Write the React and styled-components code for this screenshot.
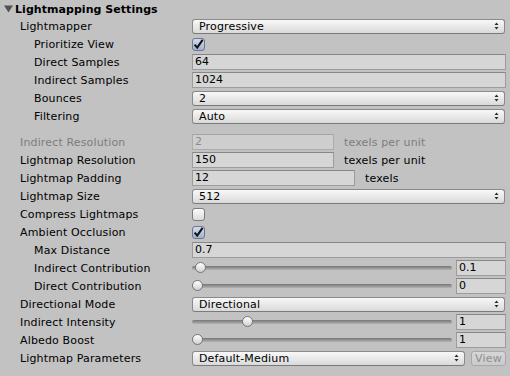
import React from "react";
import styled, { createGlobalStyle } from "styled-components";

const GlobalStyle = createGlobalStyle`
  html, body { margin: 0; padding: 0; background: #c2c2c2; }
  body {
    font-family: "DejaVu Sans", Verdana, sans-serif;
    font-size: 11px;
    color: #000;
  }
`;

const Panel = styled.div`
  width: 510px;
  height: 376px;
  box-sizing: border-box;
  padding-top: 1px;
  background: #c2c2c2;
  overflow: hidden;
`;

const Header = styled.div`
  display: flex;
  align-items: center;
  height: 16px;
  padding-left: 4px;
  gap: 2px;
  font-weight: bold;
  letter-spacing: 0.05px;
`;

const Row = styled.div`
  display: flex;
  align-items: center;
  height: 18px;
`;

const Spacer = styled.div`
  height: 8px;
`;

const Label = styled.div`
  flex: 0 0 192px;
  box-sizing: border-box;
  padding-left: ${(p) => (p.$indent ? 34 : 20)}px;
  color: ${(p) => (p.$disabled ? "#7d7d7d" : "#000")};
  white-space: nowrap;
  letter-spacing: 0.15px;
`;

const Controls = styled.div`
  flex: 1;
  min-width: 0;
  display: flex;
  align-items: center;
  gap: ${(p) => p.$gap || 0}px;
  padding-right: 4px;
`;

const TextField = styled.div`
  box-sizing: border-box;
  height: 16px;
  ${(p) => (p.$width ? `width: ${p.$width}px; flex: 0 0 ${p.$width}px;` : "flex: 1;")}
  border: 1px solid ${(p) => (p.$disabled ? "#acacac" : "#9c9c9c")};
  border-top-color: ${(p) => (p.$disabled ? "#a4a4a4" : "#878787")};
  background: ${(p) => (p.$disabled ? "#cecece" : "#d6d6d6")};
  color: ${(p) => (p.$disabled ? "#8a8a8a" : "#000")};
  padding: 0 2px;
  line-height: 14px;
  white-space: nowrap;
  overflow: hidden;
`;

const Suffix = styled.span`
  color: ${(p) => (p.$disabled ? "#7d7d7d" : "#000")};
  white-space: nowrap;
  letter-spacing: 0.15px;
`;

const PopupBox = styled.div`
  box-sizing: border-box;
  height: 15px;
  ${(p) => (p.$width ? `width: ${p.$width}px; flex: 0 0 ${p.$width}px;` : "flex: 1; margin-right: 1px;")}
  display: flex;
  align-items: center;
  justify-content: space-between;
  padding: 0 5px 0 6px;
  border: 1px solid #8a8a8a;
  border-bottom-color: #7a7a7a;
  border-radius: 3px;
  background: linear-gradient(#f8f8f8, #e6e6e6 60%, #d9d9d9);
  letter-spacing: 0.15px;
  white-space: nowrap;
`;

const Button = styled.div`
  box-sizing: border-box;
  height: 15px;
  flex: 1;
  display: flex;
  align-items: center;
  justify-content: center;
  border: 1px solid #a8a8a8;
  border-radius: 3px;
  background: linear-gradient(#d6d6d6, #cbcbcb);
  color: #8e8e8e;
  letter-spacing: 0.2px;
`;

const CheckBox = styled.div`
  box-sizing: border-box;
  width: 13px;
  height: 13px;
  border: 1px solid ${(p) => (p.$checked ? "#6f7790" : "#7c7c7c")};
  border-radius: 3px;
  background: ${(p) =>
    p.$checked
      ? "linear-gradient(#d3dbee, #a3b0d0)"
      : "linear-gradient(#fbfbfb, #dcdcdc)"};
  display: flex;
  align-items: center;
  justify-content: center;
  overflow: visible;
`;

const SliderArea = styled.div`
  flex: 1;
  position: relative;
  height: 18px;
  display: flex;
  align-items: center;
`;

const Track = styled.div`
  flex: 1;
  height: 4px;
  border-radius: 2px;
  background: linear-gradient(#767676, #9a9a9a 60%, #b4b4b4);
`;

const Thumb = styled.div`
  position: absolute;
  top: 3px;
  width: 11px;
  height: 11px;
  box-sizing: border-box;
  border-radius: 50%;
  border: 1px solid #767676;
  background: linear-gradient(#ffffff, #e4e4e4 60%, #cfcfcf);
`;

const ArrowIcon = () => (
  <svg width="5" height="8" viewBox="0 0 5 8">
    <polygon points="0.5,3 2.5,0.5 4.5,3" fill="#2a2a2a" />
    <polygon points="0.5,5 2.5,7.5 4.5,5" fill="#2a2a2a" />
  </svg>
);

const Popup = ({ value, width }) => (
  <PopupBox $width={width}>
    <span>{value}</span>
    <ArrowIcon />
  </PopupBox>
);

const Check = ({ checked }) => (
  <CheckBox $checked={checked}>
    {checked && (
      <svg width="11" height="11" viewBox="0 0 11 11" style={{ overflow: "visible" }}>
        <path d="M1.6 5.6 L4.2 8.6 L9.6 0.8" fill="none" stroke="#151515" strokeWidth="2.1" />
      </svg>
    )}
  </CheckBox>
);

const Slider = ({ value, min, max, display }) => {
  const frac = (value - min) / (max - min);
  return (
    <Controls $gap={4}>
      <SliderArea>
        <Track />
        <Thumb style={{ left: `${frac * 250}px` }} />
      </SliderArea>
      <TextField $width={50}>{display}</TextField>
    </Controls>
  );
};

export default function App() {
  return (
    <Panel>
      <GlobalStyle />
      <Header>
        <svg width="9" height="8" viewBox="0 0 9 8">
          <polygon points="0,0.5 9,0.5 4.5,7.5" fill="#525252" />
        </svg>
        <span>Lightmapping Settings</span>
      </Header>

      <Row>
        <Label>Lightmapper</Label>
        <Controls><Popup value="Progressive" /></Controls>
      </Row>
      <Row>
        <Label $indent>Prioritize View</Label>
        <Controls><Check checked /></Controls>
      </Row>
      <Row>
        <Label $indent>Direct Samples</Label>
        <Controls><TextField>64</TextField></Controls>
      </Row>
      <Row>
        <Label $indent>Indirect Samples</Label>
        <Controls><TextField>1024</TextField></Controls>
      </Row>
      <Row>
        <Label $indent>Bounces</Label>
        <Controls><Popup value="2" /></Controls>
      </Row>
      <Row>
        <Label $indent>Filtering</Label>
        <Controls><Popup value="Auto" /></Controls>
      </Row>

      <Spacer />

      <Row>
        <Label $disabled>Indirect Resolution</Label>
        <Controls $gap={10}>
          <TextField $width={142} $disabled>2</TextField>
          <Suffix $disabled>texels per unit</Suffix>
        </Controls>
      </Row>
      <Row>
        <Label>Lightmap Resolution</Label>
        <Controls $gap={10}>
          <TextField $width={142}>150</TextField>
          <Suffix>texels per unit</Suffix>
        </Controls>
      </Row>
      <Row>
        <Label>Lightmap Padding</Label>
        <Controls $gap={10}>
          <TextField $width={163}>12</TextField>
          <Suffix>texels</Suffix>
        </Controls>
      </Row>
      <Row>
        <Label>Lightmap Size</Label>
        <Controls><Popup value="512" /></Controls>
      </Row>
      <Row>
        <Label>Compress Lightmaps</Label>
        <Controls><Check /></Controls>
      </Row>
      <Row>
        <Label>Ambient Occlusion</Label>
        <Controls><Check checked /></Controls>
      </Row>
      <Row>
        <Label $indent>Max Distance</Label>
        <Controls><TextField>0.7</TextField></Controls>
      </Row>
      <Row>
        <Label $indent>Indirect Contribution</Label>
        <Slider value={0.1} min={0} max={10} display="0.1" />
      </Row>
      <Row>
        <Label $indent>Direct Contribution</Label>
        <Slider value={0} min={0} max={1} display="0" />
      </Row>
      <Row>
        <Label>Directional Mode</Label>
        <Controls><Popup value="Directional" /></Controls>
      </Row>
      <Row>
        <Label>Indirect Intensity</Label>
        <Slider value={1} min={0} max={5} display="1" />
      </Row>
      <Row>
        <Label>Albedo Boost</Label>
        <Slider value={1} min={1} max={10} display="1" />
      </Row>
      <Row>
        <Label>Lightmap Parameters</Label>
        <Controls $gap={6}>
          <Popup value="Default-Medium" width={273} />
          <Button>View</Button>
        </Controls>
      </Row>
    </Panel>
  );
}
